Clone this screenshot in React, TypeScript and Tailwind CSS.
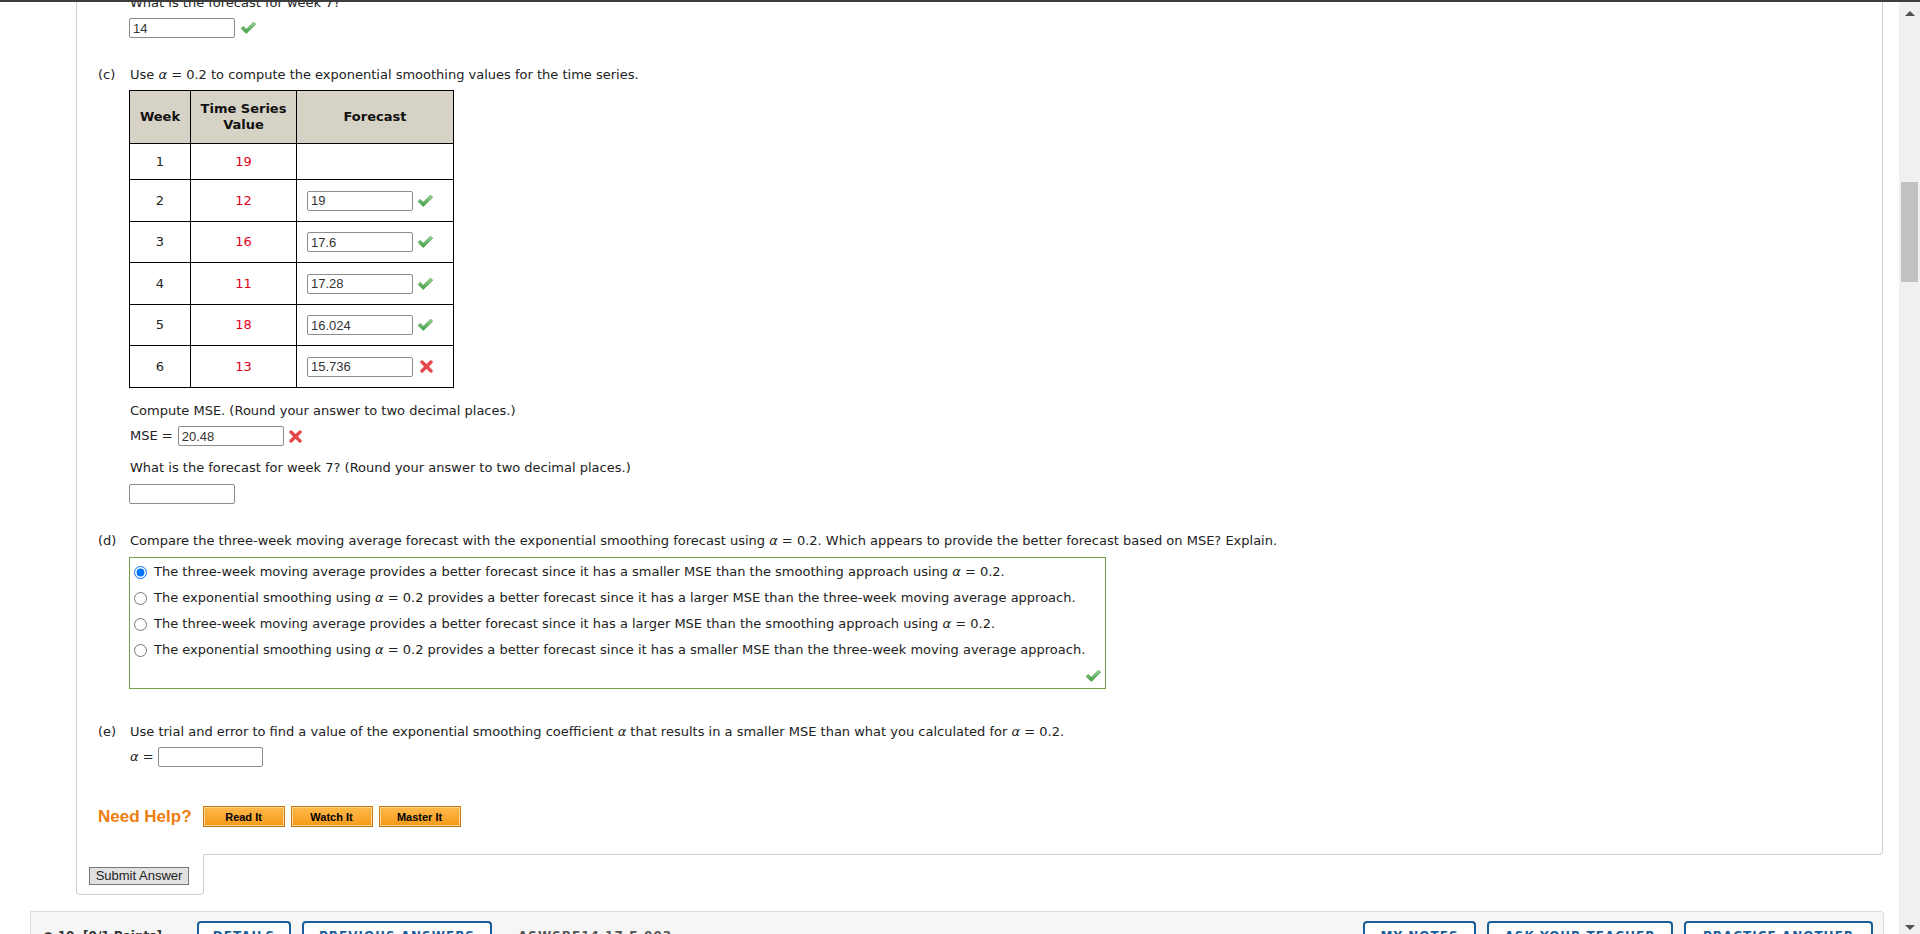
import type { ReactNode } from 'react';

const rows = [
  { week: 1, value: 19, forecast: null, ok: null, h: 'h-[36px]' },
  { week: 2, value: 12, forecast: '19', ok: true, h: 'h-[42px]' },
  { week: 3, value: 16, forecast: '17.6', ok: true, h: 'h-[41px]' },
  { week: 4, value: 11, forecast: '17.28', ok: true, h: 'h-[42px]' },
  { week: 5, value: 18, forecast: '16.024', ok: true, h: 'h-[41px]' },
  { week: 6, value: 13, forecast: '15.736', ok: false, h: 'h-[42px]' },
];

const A = () => <i className="font-['DejaVu_Sans',sans-serif]">α</i>;

const options: ReactNode[] = [
  <>The three-week moving average provides a better forecast since it has a smaller MSE than the smoothing approach using <A /> = 0.2.</>,
  <>The exponential smoothing using <A /> = 0.2 provides a better forecast since it has a larger MSE than the three-week moving average approach.</>,
  <>The three-week moving average provides a better forecast since it has a larger MSE than the smoothing approach using <A /> = 0.2.</>,
  <>The exponential smoothing using <A /> = 0.2 provides a better forecast since it has a smaller MSE than the three-week moving average approach.</>,
];

function Check() {
  return (
    <svg width="15" height="12" viewBox="0 0 15 12" className="shrink-0">
      <defs>
        <linearGradient id="ck" x1="0" y1="0" x2="0" y2="1">
          <stop offset="0" stopColor="#9ad89a" />
          <stop offset="1" stopColor="#3f9b3f" />
        </linearGradient>
      </defs>
      <polygon points="0,6.5 2.2,4.3 5.3,7.2 12.6,0 14.8,2.2 5.3,11.6" fill="url(#ck)" stroke="#4a9a4a" strokeWidth="0.6" />
    </svg>
  );
}

function Cross() {
  return (
    <svg width="13" height="13" viewBox="0 0 13 13" className="shrink-0">
      <path d="M2 2 L11 11 M11 2 L2 11" stroke="#e5484d" strokeWidth="3.4" strokeLinecap="round" />
    </svg>
  );
}

function Box({ value = '', className = 'w-[106px]' }: { value?: string; className?: string }) {
  return (
    <input
      type="text"
      defaultValue={value}
      readOnly
      className={`h-[20px] ${className} rounded-[2px] border border-[#8c8c8c] bg-white px-[3px] font-['Liberation_Sans',Arial,sans-serif] text-[13px] text-[#333] outline-none`}
    />
  );
}

function Part({ label, children }: { label: string; children: ReactNode }) {
  return (
    <div className="flex leading-[16px]">
      <span className="w-[31px] shrink-0">({label})</span>
      <span className="pl-[1px]">{children}</span>
    </div>
  );
}

function HelpButton({ text }: { text: string }) {
  return (
    <button className="h-[21px] w-[82px] border border-[#c57a1c] bg-gradient-to-b from-[#ffb94a] to-[#f59b12] font-['Liberation_Sans',Arial,sans-serif] text-[11px] font-bold text-black shadow-[inset_0_0_0_1px_#ffd68a]">
      {text}
    </button>
  );
}

function BarButton({ text, w }: { text: string; w: string }) {
  return (
    <div className={`${w} h-[30px] rounded-t-[4px] border-2 border-b-0 border-[#1a5e99] bg-white pt-[6px] text-center text-[12px] leading-[14px] font-bold tracking-[1px] text-[#1a5e99]`}>
      {text}
    </div>
  );
}

export default function App() {
  return (
    <div className="flex h-[934px] w-[1920px] flex-col overflow-hidden bg-white font-['DejaVu_Sans',Verdana,sans-serif] text-[13px] text-[#222]">
      <div className="h-[2px] shrink-0 bg-[#3d3d3d]" />
      <div className="flex min-h-0 flex-1">
        <main className="w-[1899px] shrink-0 overflow-hidden">
          <div className="ml-[76px] w-[1807px] rounded-br-[4px] border-r border-b border-l border-[#cfcfcf] pl-[21px] pb-[24px]">
            <div className="-mt-[7px] pl-[32px] leading-[16px]">What is the forecast for week 7?</div>
            <div className="mt-[7px] flex items-center gap-[6px] pl-[31px]">
              <Box value="14" />
              <Check />
            </div>

            <div className="mt-[29px]">
              <Part label="c">
                Use <A /> = 0.2 to compute the exponential smoothing values for the time series.
              </Part>
            </div>

            <div className="ml-[31px] mt-[7px] w-[325px] border-t border-l border-black">
              <div className="grid h-[53px] grid-cols-[61px_106px_157px] bg-[#d6d2c6] text-center font-bold leading-[16px] text-[#111]">
                <div className="flex items-center justify-center border-r border-b border-black">Week</div>
                <div className="flex items-center justify-center border-r border-b border-black">
                  Time Series
                  <br />
                  Value
                </div>
                <div className="flex items-center justify-center border-r border-b border-black">Forecast</div>
              </div>
              {rows.map((r) => (
                <div key={r.week} className={`grid ${r.h} grid-cols-[61px_106px_157px]`}>
                  <div className="flex items-center justify-center border-r border-b border-black">{r.week}</div>
                  <div className="flex items-center justify-center border-r border-b border-black text-[#e3001b]">{r.value}</div>
                  <div className="flex items-center border-r border-b border-black pl-[10px]">
                    {r.forecast !== null && (
                      <>
                        <Box value={r.forecast} />
                        <span className={r.ok ? 'ml-[5px]' : 'ml-[7px]'}>{r.ok ? <Check /> : <Cross />}</span>
                      </>
                    )}
                  </div>
                </div>
              ))}
            </div>

            <div className="ml-[32px] mt-[15px] leading-[16px]">Compute MSE. (Round your answer to two decimal places.)</div>
            <div className="ml-[32px] mt-[7px] flex items-center">
              <span className="mr-[5px]">MSE =</span>
              <Box value="20.48" />
              <span className="ml-[5px]">
                <Cross />
              </span>
            </div>
            <div className="ml-[32px] mt-[14px] leading-[16px]">What is the forecast for week 7? (Round your answer to two decimal places.)</div>
            <div className="ml-[31px] mt-[8px]">
              <Box />
            </div>

            <div className="mt-[29px]">
              <Part label="d">
                Compare the three-week moving average forecast with the exponential smoothing forecast using <A /> = 0.2. Which appears to provide the better forecast based on MSE? Explain.
              </Part>
            </div>
            <div className="ml-[31px] mt-[8px] w-[977px] border border-[#6fa243] pt-[1px] pr-[4px] pb-[6px]">
              {options.map((o, i) => (
                <label key={i} className="flex h-[26px] items-center">
                  <input type="radio" name="d" defaultChecked={i === 0} className="ml-[4px] h-[13px] w-[13px]" />
                  <span className="ml-[7px] leading-[16px]">{o}</span>
                </label>
              ))}
              <div className="mt-[7px] flex justify-end">
                <Check />
              </div>
            </div>

            <div className="mt-[35px]">
              <Part label="e">
                Use trial and error to find a value of the exponential smoothing coefficient <A /> that results in a smaller MSE than what you calculated for <A /> = 0.2.
              </Part>
            </div>
            <div className="ml-[32px] mt-[7px] flex items-center">
              <span className="mr-[4px]">
                <A /> =
              </span>
              <Box className="w-[105px]" />
            </div>

            <div className="mt-[37px] flex items-center">
              <span className="mr-[11px] font-['Liberation_Sans',Arial,sans-serif] text-[17px] font-bold text-[#ef7d0f]">Need Help?</span>
              <div className="flex gap-[6px]">
                <HelpButton text="Read It" />
                <HelpButton text="Watch It" />
                <HelpButton text="Master It" />
              </div>
            </div>
          </div>

          <div className="relative ml-[76px] -mt-[1px] h-[41px] w-[128px] rounded-b-[4px] border-r border-b border-l border-[#cfcfcf] bg-white pt-[12px] pl-[12px]">
            <button className="h-[18px] w-[100px] border border-[#767676] bg-[#e1e1e1] font-['Liberation_Sans',Arial,sans-serif] text-[13px] leading-[16px] text-[#222]">
              Submit Answer
            </button>
          </div>

          <div className="ml-[30px] mt-[16px] flex h-[40px] w-[1854px] items-start rounded-tr-[4px] border-t border-r border-l border-[#dcdcdc] bg-[#f6f6f6] pt-[9px]">
            <div className="w-[166px] shrink-0 pt-[8px] pl-[12px] text-[12px] leading-[14px] font-bold text-[#333]">● 10. [0/1 Points]</div>
            <BarButton text="DETAILS" w="w-[94px]" />
            <div className="ml-[11px]">
              <BarButton text="PREVIOUS ANSWERS" w="w-[190px]" />
            </div>
            <div className="ml-[26px] pt-[8px] text-[12px] leading-[14px] font-bold tracking-[1px] text-[#555]">ASWSBE14 17.E.003</div>
            <div className="ml-auto mr-[10px] flex gap-[11px]">
              <BarButton text="MY NOTES" w="w-[113px]" />
              <BarButton text="ASK YOUR TEACHER" w="w-[186px]" />
              <BarButton text="PRACTICE ANOTHER" w="w-[189px]" />
            </div>
          </div>
        </main>

        <div className="flex w-[21px] shrink-0 flex-col items-center bg-[#f0f0f0]">
          <div className="mt-[9px] h-0 w-0 border-r-[5px] border-b-[5px] border-l-[5px] border-r-transparent border-b-[#505050] border-l-transparent" />
          <div className="mt-[166px] h-[100px] w-[17px] bg-[#c1c1c1]" />
          <div className="mt-auto mb-[4px] h-0 w-0 border-t-[5px] border-r-[5px] border-l-[5px] border-t-[#505050] border-r-transparent border-l-transparent" />
        </div>
      </div>
    </div>
  );
}
